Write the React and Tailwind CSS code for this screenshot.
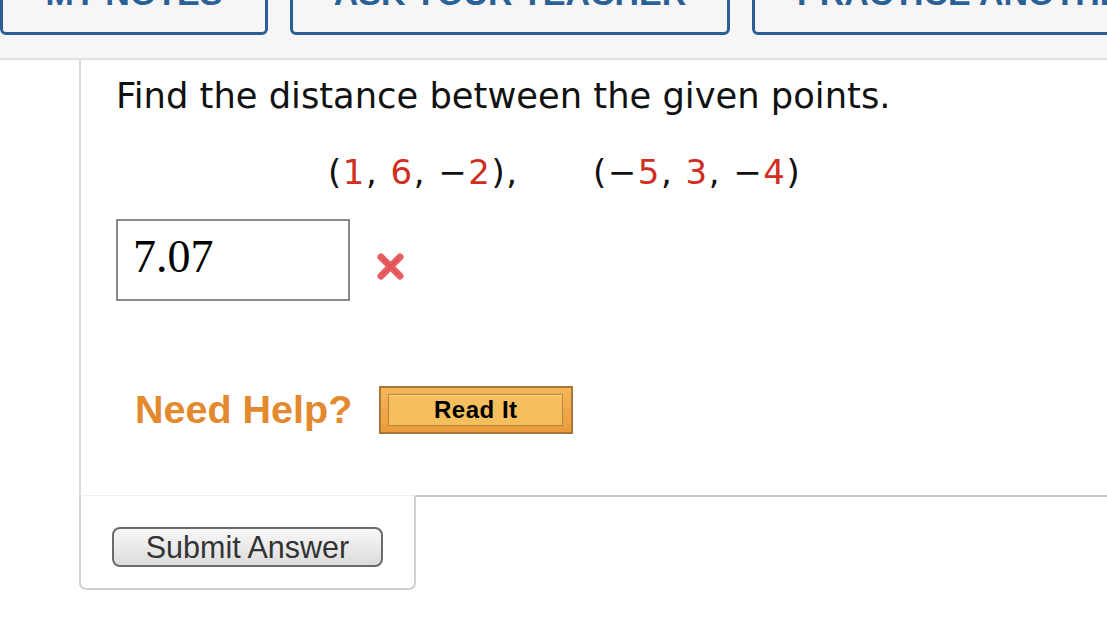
export default function App() {
  const tabs = [
    { label: "MY NOTES", w: "w-[268px]" },
    { label: "ASK YOUR TEACHER", w: "w-[440px]" },
    { label: "PRACTICE ANOTHER", w: "w-[440px]" },
  ];

  return (
    <div className="w-full min-h-screen bg-white overflow-hidden font-['Liberation_Sans',Arial,sans-serif]">

      {/* top toolbar with the cut-off tab buttons */}
      <div className="h-[60px] bg-[#f6f6f6] border-b-2 border-[#e1e1e1] flex gap-[22px] overflow-hidden">
        {tabs.map((t) => (
          <div
            key={t.label}
            className={`${t.w} shrink-0 h-[75px] -mt-[40px] border-[3px] border-[#2b6096] rounded-b-[6px] bg-[#f6f6f6] flex justify-center`}
          >
            <span className="mt-[13px] text-[34px] leading-none font-bold text-[#2b6096] whitespace-nowrap">
              {t.label}
            </span>
          </div>
        ))}
      </div>

      {/* question panel */}
      <div className="ml-[79px] border-l-2 border-[#d9d9d9] h-[435px] pl-[35px] pt-[15px]">
        <p className="text-[35.3px] leading-[42px] text-[#111] font-['DejaVu_Sans',Verdana,sans-serif]">
          Find the distance between the given points.
        </p>

        <div className="mt-[34px] flex text-[34px] leading-[42px] tracking-[1.5px] text-[#111] font-['DejaVu_Sans',Verdana,sans-serif]">
          <span className="ml-[212px] w-[265px] whitespace-nowrap">
            (<span className="text-[#cf2e22]">1</span>, <span className="text-[#cf2e22]">6</span>, −<span className="text-[#cf2e22]">2</span>),
          </span>
          <span className="whitespace-nowrap">
            (−<span className="text-[#cf2e22]">5</span>, <span className="text-[#cf2e22]">3</span>, −<span className="text-[#cf2e22]">4</span>)
          </span>
        </div>

        <div className="mt-[26px] flex items-start">
          <div className="w-[234px] h-[82px] border-2 border-[#8a8a8a] bg-white pl-[15px] pt-[13px]">
            <span className="text-[46px] leading-none text-black font-['Liberation_Serif','Times_New_Roman',serif]">
              7.07
            </span>
          </div>
          <svg className="ml-[25px] mt-[32px]" width="31" height="31" viewBox="0 0 31 31">
            <g stroke="#e85f62" strokeWidth="7" strokeLinecap="round">
              <line x1="6" y1="6" x2="25" y2="25" />
              <line x1="25" y1="6" x2="6" y2="25" />
            </g>
            <g stroke="#d94448" strokeWidth="2" strokeLinecap="round" opacity="0.45">
              <line x1="8" y1="8" x2="23" y2="23" />
              <line x1="23" y1="8" x2="8" y2="23" />
            </g>
          </svg>
        </div>

        <div className="mt-[85px] flex items-center">
          <span className="ml-[19px] text-[39.5px] leading-none font-bold text-[#e3892e]">
            Need Help?
          </span>
          <button
            type="button"
            className="ml-[27px] w-[194px] h-[48px] border-2 border-[#a9773a] bg-gradient-to-b from-[#f6b45a] to-[#eb9c3a] pt-[6px] pb-[6px] pl-[7px] pr-[8px]"
          >
            <div className="h-full border border-[#b8843e] bg-[#f4bf5c] flex items-center justify-center shadow-[inset_0_1px_0_#f9d794]">
              <span className="text-[24px] font-bold text-black leading-none tracking-[0.5px]">Read It</span>
            </div>
          </button>
        </div>
      </div>

      {/* submit tab */}
      <div className="ml-[79px] flex">
        <div className="w-[337px] h-[95px] border-l-2 border-r-2 border-b-2 border-[#d2d2d2] border-t border-t-[#eeeeee] rounded-b-[7px] pl-[31px] pt-[31px]">
          <button
            type="button"
            className="w-[271px] h-[40px] rounded-[8px] border-2 border-[#6a6a6a] bg-gradient-to-b from-[#f8f8f8] to-[#dcdcdc] text-[30.5px] leading-none text-[#333]"
          >
            Submit Answer
          </button>
        </div>
        <div className="flex-1 border-t-2 border-[#c8c8c8]" />
      </div>

    </div>
  );
}
